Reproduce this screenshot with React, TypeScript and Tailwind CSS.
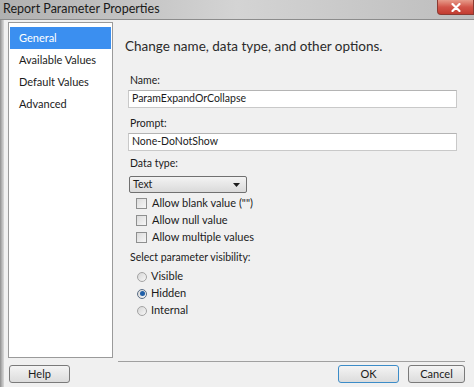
import React from "react";

const font = { fontFamily: 'Lato, "Noto Sans", sans-serif' };

function Checkbox({ label }: { label: string }) {
  return (
    <div className="flex h-[17px] items-center">
      <span className="ml-[8px] h-[11px] w-[11px] border border-[#8e8f8f] bg-gradient-to-br from-[#dcdcdc] to-[#f6f6f6]" />
      <span className="ml-[5px] text-[11px] text-[#1b1b1b]">{label}</span>
    </div>
  );
}

function Radio({ label, checked }: { label: string; checked?: boolean }) {
  return (
    <div className="flex h-[17px] items-center">
      <span
        className={
          "ml-[9px] flex h-[10px] w-[10px] items-center justify-center rounded-full border bg-gradient-to-br from-[#d6d6d6] to-[#f7f7f7] " +
          (checked ? "border-[#5a6d85]" : "border-[#a3a3a3]")
        }
      >
        {checked && <span className="h-[5px] w-[5px] rounded-full bg-[#1f5fa8]" />}
      </span>
      <span className="ml-[4px] text-[11px] text-[#1b1b1b]">{label}</span>
    </div>
  );
}

function Button({ label, primary, w }: { label: string; primary?: boolean; w: string }) {
  return (
    <div
      className={
        "flex h-[18px] items-center justify-center rounded-[3px] border bg-gradient-to-b from-[#f4f4f4] to-[#dcdcdc] text-[11px] text-[#1b1b1b] " +
        w +
        (primary ? " border-[#3c8cc8]" : " border-[#7a7a7a]")
      }
    >
      {label}
    </div>
  );
}

export default function App() {
  return (
    <div className="flex h-[387px] w-[474px] flex-col overflow-hidden bg-[#f0f0f0]" style={font}>
      {/* title bar */}
      <div className="flex h-[20px] items-start justify-between bg-gradient-to-r from-[#b0b0b0] via-[#d4d4d4] to-[#bdbdbd] border-b border-[#8c8c8c]">
        <span className="ml-[3px] mt-[1px] text-[12.5px] leading-[16px] text-[#1a1a1a]">Report Parameter Properties</span>
        <div className="flex h-[15px] w-[37px] items-center justify-center rounded-bl-[4px] border border-t-0 border-[#8a3a32] bg-gradient-to-b from-[#e69a8a] via-[#d2554a] to-[#c23c30]">
          <svg width="10" height="9" viewBox="0 0 10 9">
            <path d="M1.5 1 L8.5 8 M8.5 1 L1.5 8" stroke="#ffffff" strokeWidth="2.2" strokeLinecap="round" />
          </svg>
        </div>
      </div>

      {/* body */}
      <div className="flex flex-1">
        <div className="w-[4px] bg-gradient-to-r from-[#8e8e8e] via-[#b8b8b8] to-[#d9d9d9]" />
        <div className="flex flex-1 flex-col pl-[4px] pr-[9px]">
          <div className="flex pt-[2px]">
            {/* nav */}
            <div className="h-[336px] w-[105px] border border-[#9a9a9a] bg-white p-[1px] pt-[4px]">
              <div className="flex h-[22px] items-center bg-[#3b8ff0] pl-[9px] text-[11px] text-white">General</div>
              <div className="flex h-[22px] items-center pl-[9px] text-[11px] text-[#1b1b1b]">Available Values</div>
              <div className="flex h-[22px] items-center pl-[9px] text-[11px] text-[#1b1b1b]">Default Values</div>
              <div className="flex h-[22px] items-center pl-[9px] text-[11px] text-[#1b1b1b]">Advanced</div>
            </div>

            {/* content */}
            <div className="ml-[5px] h-[340px] flex-1 border-b border-[#a0a0a0]">
              <div className="ml-[7px] mt-[15px] text-[13.5px] leading-[18px] text-[#2b2b2b]">
                Change name, data type, and other options.
              </div>
              <div className="ml-[12px] mt-[18px] text-[10.5px] leading-[14px] text-[#1b1b1b]">Name:</div>
              <div className="ml-[10px] mt-[3px] flex h-[18px] w-[329px] items-center border border-[#c9c9c9] border-t-[#b4b4b4] bg-white pl-[3px] text-[10.5px] text-[#1b1b1b]">
                ParamExpandOrCollapse
              </div>
              <div className="ml-[12px] mt-[8px] text-[10.5px] leading-[14px] text-[#1b1b1b]">Prompt:</div>
              <div className="ml-[10px] mt-[3px] flex h-[18px] w-[329px] items-center border border-[#c9c9c9] border-t-[#b4b4b4] bg-white pl-[3px] text-[10.5px] text-[#1b1b1b]">
                None-DoNotShow
              </div>
              <div className="ml-[12px] mt-[5px] text-[10.5px] leading-[14px] text-[#1b1b1b]">Data type:</div>
              <div className="ml-[11px] mt-[6px] flex h-[17px] w-[118px] items-center justify-between rounded-[2px] border border-[#707070] bg-gradient-to-b from-[#f3f3f3] to-[#dadada] pl-[3px] pr-[6px] text-[10.5px] text-[#1b1b1b]">
                <span>Text</span>
                <svg width="7" height="4" viewBox="0 0 7 4">
                  <path d="M0 0 H7 L3.5 4 Z" fill="#1b1b1b" />
                </svg>
              </div>
              <div className="ml-[10px] mt-[2px]">
                <Checkbox label={'Allow blank value ("")'} />
                <Checkbox label="Allow null value" />
                <Checkbox label="Allow multiple values" />
              </div>
              <div className="ml-[12px] mt-[4px] text-[10.5px] leading-[14px] text-[#1b1b1b]">Select parameter visibility:</div>
              <div className="ml-[10px] mt-[4px]">
                <Radio label="Visible" />
                <Radio label="Hidden" checked />
                <Radio label="Internal" />
              </div>
            </div>
          </div>

          {/* buttons */}
          <div className="mt-[3px] flex items-center">
            <div className="ml-[1px]">
              <Button label="Help" w="w-[61px]" />
            </div>
            <div className="ml-auto flex gap-[9px]">
              <Button label="OK" primary w="w-[61px]" />
              <Button label="Cancel" w="w-[57px]" />
            </div>
          </div>
        </div>
      </div>
    </div>
  );
}
